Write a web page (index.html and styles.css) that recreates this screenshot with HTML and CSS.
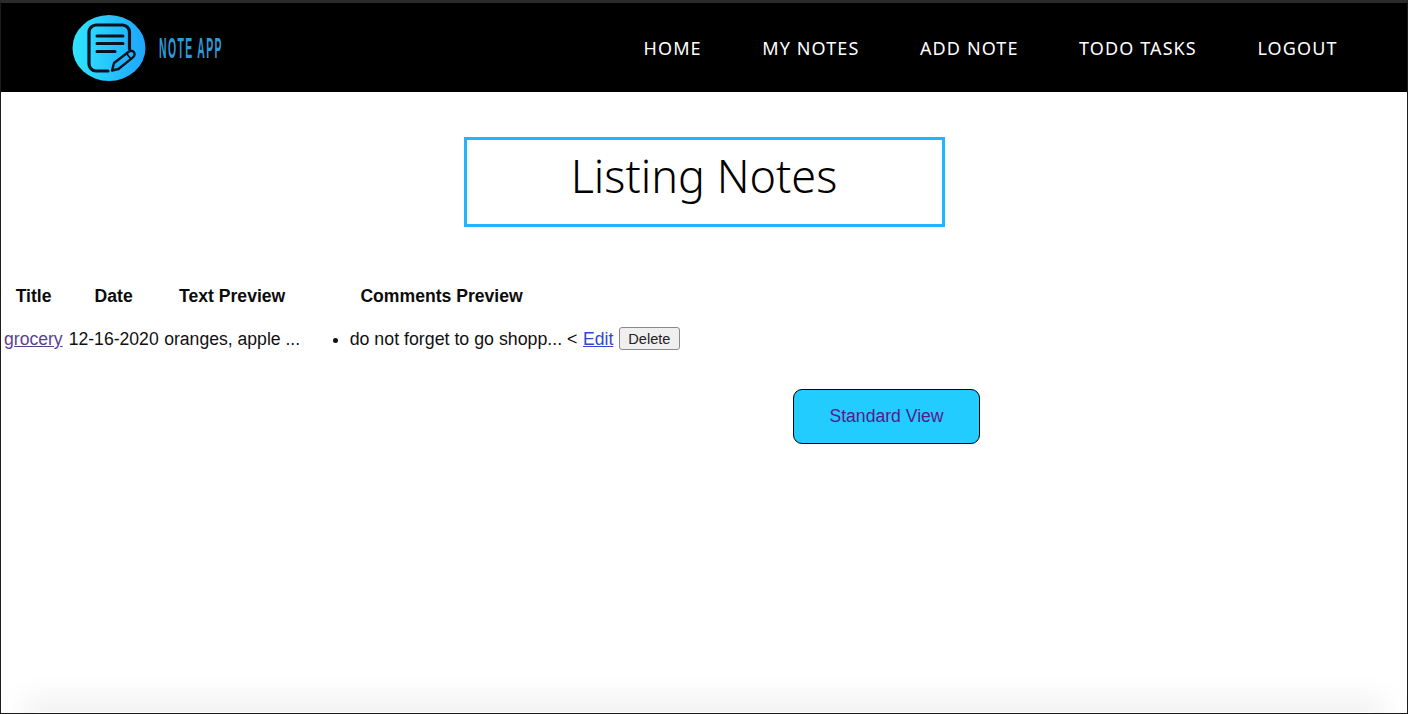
FILE: index.html
```html
<!DOCTYPE html>
<html lang="en">
<head>
<meta charset="utf-8">
<title>Listing Notes</title>
<link rel="stylesheet" href="styles.css">
</head>
<body>
<div class="frame">
  <header class="topbar">
    <a class="brand" href="#">
      <svg class="brand-icon" viewBox="72 15 74 66" width="74" height="66" aria-hidden="true">
        <defs>
          <linearGradient id="disc" x1="0" y1="0" x2="1" y2="0">
            <stop offset="0" stop-color="#2fe6ff"/>
            <stop offset="1" stop-color="#1ea6ff"/>
          </linearGradient>
        </defs>
        <ellipse cx="109" cy="48" rx="36.500" ry="33" fill="url(#disc)"/>
        <path d="M129.500 49V32a7 7 0 0 0-7-7H96a7 7 0 0 0-7 7v32a7 7 0 0 0 7 7h12" fill="none" stroke="#06121c" stroke-width="3.200" stroke-linecap="round"/>
        <path d="M97 36h26M97 43.500h26M97 51.500h18" fill="none" stroke="#06121c" stroke-width="3" stroke-linecap="round"/>
        <path d="M112 70.500l2-7.500 15-11.500a3.500 3.500 0 0 1 4.800.6 3.500 3.500 0 0 1-.6 5L118.500 69z" fill="#1fb4ff" stroke="#06121c" stroke-width="2.400" stroke-linejoin="round"/>
        <path d="M126.500 53.500l4.500 5.500" fill="none" stroke="#06121c" stroke-width="1.800"/>
      </svg>
      <span class="brand-name">NOTE APP</span>
    </a>
    <nav class="menu">
      <a href="#">HOME</a>
      <a href="#">MY NOTES</a>
      <a href="#">ADD NOTE</a>
      <a href="#">TODO TASKS</a>
      <a href="#">LOGOUT</a>
    </nav>
  </header>
  <main class="content">
    <h1 class="page-title">Listing Notes</h1>
    <table class="notes">
      <thead>
        <tr>
          <th>Title</th>
          <th>Date</th>
          <th>Text Preview</th>
          <th>Comments Preview</th>
          <th></th>
          <th></th>
        </tr>
      </thead>
      <tbody>
        <tr>
          <td class="first"><a class="visited" href="#">grocery</a></td>
          <td>12-16-2020</td>
          <td>oranges, apple ...</td>
          <td>
            <ul class="comments">
              <li>do not forget to go shopp... &lt;</li>
            </ul>
          </td>
          <td><a class="edit" href="#">Edit</a></td>
          <td><button class="delete" type="button">Delete</button></td>
        </tr>
      </tbody>
    </table>
    <a class="view-button" href="#">Standard View</a>
  </main>
  <div class="bottom-shade"></div>
</div>
</body>
</html>
```
FILE: styles.css
```css
* { box-sizing: border-box; }
html, body { margin: 0; height: 100%; }
body { background: #fff; font-family: "Liberation Sans", Arial, sans-serif; color: #111; }
.frame {
  height: 714px;
  display: flex;
  flex-direction: column;
  overflow: hidden;
  border: 1px solid #1c1c1c;
  border-top: 3px solid #2b2b2b;
  background: #fff;
}
.topbar {
  height: 89px;
  flex: none;
  background: #000;
  display: flex;
  align-items: center;
  justify-content: space-between;
  padding: 1px 69.500px 0 71px;
}
.brand { display: flex; align-items: center; gap: 13px; text-decoration: none; }
.brand-icon { display: block; }
.brand-name {
  display: inline-block;
  width: 63px;
  white-space: nowrap;
  color: #2f9ad8;
  font-size: 30px;
  font-weight: 700;
  line-height: 30px;
  letter-spacing: 4px;
  transform: scaleX(.347);
  transform-origin: left center;
  font-family: "Liberation Sans", sans-serif;
}
.menu { display: flex; gap: 60.600px; }
.menu a {
  color: #fff;
  text-decoration: none;
  font-family: "Noto Sans", sans-serif;
  font-size: 18px;
  line-height: 24px;
  letter-spacing: 1.100px;
}
.content { flex: 1; min-height: 0; }
.page-title {
  width: 481px;
  height: 90px;
  margin: 45px auto 0;
  border: 3px solid #1fb5ff;
  text-align: center;
  font-family: "Noto Sans", sans-serif;
  font-weight: 300;
  font-size: 45px;
  line-height: 72px;
  color: #000;
}
.notes {
  margin: 55px 0 0 -1px;
  border-collapse: separate;
  border-spacing: 2px;
  font-size: 17.600px;
}
.notes th, .notes td { padding: 2px 1.500px 2px 2px; }
.notes th { padding-bottom: 1px; color: #0c0c0c; }
.notes .first { padding-right: 2px; }
.comments { margin: 17px 0; padding-left: 44px; font-size: 17.800px; }
.visited { color: #5b3f8f; }
.edit { color: #3346cf; }
.delete {
  display: block;
  margin-bottom: 2px;
  font-family: "Liberation Sans", sans-serif;
  font-size: 14.600px;
  height: 23px;
  width: 61px;
  padding: 0;
  color: #222;
  background: #efefef;
  border: 1px solid #8a8a8a;
  border-radius: 3px;
}
.view-button {
  display: flex;
  align-items: center;
  justify-content: center;
  width: 187px;
  height: 55px;
  margin: 18px 0 0 792px;
  background: #22ccff;
  border: 1px solid #000;
  border-radius: 9px;
  color: #551a8b;
  font-size: 17.600px;
  text-decoration: none;
}
.bottom-shade {
  flex: none;
  height: 1px;
  margin: 0 35px;
  box-shadow: 0 0 30px 12px rgba(0, 0, 0, .075);
}
```
